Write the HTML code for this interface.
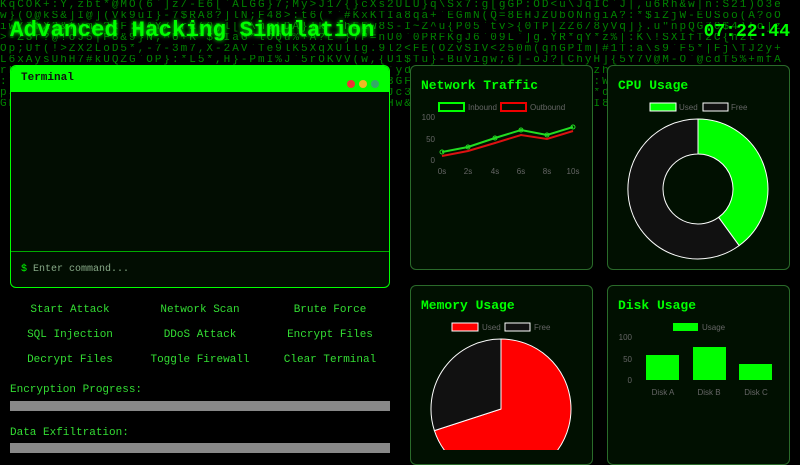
<!DOCTYPE html>
<html><head><meta charset="utf-8"><style>
*{margin:0;padding:0;box-sizing:border-box}
body{width:800px;height:450px;overflow:hidden;background:#000;font-family:"Liberation Mono",monospace;position:relative;color:#0f0}
.mx{position:absolute;left:0;top:0;width:800px;font-size:11px;letter-spacing:2px;color:#0b0;opacity:.7;overflow:hidden}
.mx div{height:11px;line-height:11px;white-space:pre;overflow:hidden}
h1{position:absolute;left:10px;top:17px;font-size:22.5px;font-weight:bold;color:#0f0;text-shadow:0 0 4px #0f0}
.clock{position:absolute;right:10px;top:22px;font-size:18px;font-weight:bold;color:#0f0}
.term{position:absolute;left:10px;top:65px;width:380px;height:223px;background:#020d02;border:1px solid #0f0;border-radius:6px;overflow:hidden}
.th{height:26px;background:#0f0;color:#111;font-size:11px;font-weight:bold;padding:6px 10px}
.dots{position:absolute;right:10px;top:9px}
.dots i{display:inline-block;width:8px;height:8px;border-radius:50%;margin-left:4px}
.inp{position:absolute;left:0;right:0;top:185px;height:38px;border-top:1px solid #0a0;font-size:10px;padding:12px 10px;color:#8a8}
.inp b{color:#0f0;font-weight:normal}
.btn{position:absolute;font-size:11px;color:#3d3;text-align:center;width:130px}
.lbl{position:absolute;left:10px;font-size:11px;color:#3d3}
.bar{position:absolute;left:10px;width:380px;height:10px;background:#888}
.pn{position:absolute;width:183px;background:#011001;border:1px solid #2a6a2a;border-radius:6px}
.pt{position:absolute;left:10px;top:12px;font-size:13px;font-weight:bold;color:#0f0}
</style></head><body>
<div class="mx">
<div>KqCOK+:Y,zbt*@MO(6`]z/-E6[`ALGG}7;My&gt;J1/{}cXs2ULU}q\Sx7:g[gGP:OD&lt;u\JqIC`J|,u6Rh&amp;w|n:S21)O3e</div>
<div>w}(O@kS&amp;]I@](Vk9uI}-7$RA8?]lN;F48&gt;:t6(*`#KxKTIa8qa+`EGmN(Q=8EHJZUbONngiA?:*$iZjW-EUSoo(A?oO</div>
<div>iw/*fX3&amp;fvm&gt;?kF:^^Y/(rR(0jl[f\mq[DA}}k-*hEEw8S-I~Z^u{P05`tv&gt;{0TP[ZZ6/8yVq]}.u"npQG70$4)[o]z</div>
<div>&gt;-Z3r?@!oJ5|F8&amp;9}N;^U+K*$2IaG*lOQu%+A?L*}7P=nU0`0PRFKgJ6`09L`]g.YR*qY*z%|:K\!SXIfT2C{h2t</div>
<div>Op;Uf(!&gt;ZX2LoD5*,-7-3m7,X-2AV`Te9lK5XqXUllg.9l2&lt;FE(OZvSIV&lt;250m(qnGPIm|#1T:a\s9`F5*|Fj\TJ2y+</div>
<div>L6xAysUhH7#kUQZG`OP}:*L5*,H}-PmI%J`5rOKVV(w,{U1$Tu}-BuVigw;6]-oJ?[ChyH]{5Y7V@M-O`@cdT5%+mfA</div>
<div>rkS1xH$3u0mc?Z?!&lt;&lt;z}&amp;tnbZ!zf8hR:`,*VUjMb&lt;pOI9`yd_`]!4n9J?!*:9aBERI,oyzhS8=/&lt;!K}s8AT|626;(/</div>
<div>:\/#h)o~S:!Lu[)&amp;+z\jR(5ZHh;TxC/AQPO@]]=~o*A2q3GFSOR8&amp;2S|.{ZOrDBT+yFzi:W!Y[pE)Kl$6kE`]w5&gt;q</div>
<div>pJ@/ss0Y)Q:~$!!aN=SbXZ&amp;1T.EA+}X:;FnPu*9oQ?L#GJc3yq%TD!eVuO-&lt;I\AFP*i0w*d|c,m+qXQrI;Fr:[wWJx</div>
<div>GE4%2Qv7|@%/&lt;}Tf4;n\t?M2IWsVUR`6&amp;GzSy;1)a-/c=Hw&amp;{h(*fQ2Ts/nBq.p{kZ\e,I8_y?Nx%/AL0K~&lt;[|f&gt;#</div>
</div>
<h1>Advanced Hacking Simulation</h1>
<div class="clock">07:22:44</div>
<div class="term"><div class="th">Terminal</div>
<div class="dots"><i style="background:#e33"></i><i style="background:#eb2"></i><i style="background:#3a6"></i></div>
<div class="inp"><b>$</b> Enter command...</div></div>
<div class="btn" style="left:5px;top:304px">Start Attack</div>
<div class="btn" style="left:135px;top:304px">Network Scan</div>
<div class="btn" style="left:265px;top:304px">Brute Force</div>
<div class="btn" style="left:5px;top:329px">SQL Injection</div>
<div class="btn" style="left:135px;top:329px">DDoS Attack</div>
<div class="btn" style="left:265px;top:329px">Encrypt Files</div>
<div class="btn" style="left:5px;top:354px">Decrypt Files</div>
<div class="btn" style="left:135px;top:354px">Toggle Firewall</div>
<div class="btn" style="left:265px;top:354px">Clear Terminal</div>
<div class="lbl" style="top:384px">Encryption Progress:</div>
<div class="bar" style="top:401px"></div>
<div class="lbl" style="top:427px">Data Exfiltration:</div>
<div class="bar" style="top:443px"></div>

<div class="pn" style="left:410px;top:65px;height:205px"><div class="pt">Network Traffic</div></div>
<div class="pn" style="left:607px;top:65px;height:205px"><div class="pt">CPU Usage</div></div>
<div class="pn" style="left:410px;top:285px;height:180px"><div class="pt">Memory Usage</div></div>
<div class="pn" style="left:607px;top:285px;height:180px"><div class="pt">Disk Usage</div></div>

<svg width="800" height="450" style="position:absolute;left:0;top:0" font-family="Liberation Sans,sans-serif" font-size="8" fill="#666">
<rect x="439" y="103" width="25" height="8" fill="none" stroke="#0f0" stroke-width="2"/><text x="468" y="110">Inbound</text>
<rect x="501" y="103" width="25" height="8" fill="none" stroke="#e00" stroke-width="2"/><text x="530" y="110">Outbound</text>
<text x="435" y="120" text-anchor="end">100</text><text x="435" y="142" text-anchor="end">50</text><text x="435" y="163" text-anchor="end">0</text>
<g text-anchor="middle"><text x="442" y="174">0s</text><text x="468" y="174">2s</text><text x="495" y="174">4s</text><text x="521" y="174">6s</text><text x="547" y="174">8s</text><text x="573" y="174">10s</text></g>
<polyline points="442,152 468,147 495,138 521,130 547,135 573,127" fill="none" stroke="#2d2" stroke-width="2"/>
<polyline points="442,156 468,151 495,143 521,135 547,139 573,131" fill="none" stroke="#d11" stroke-width="2"/>
<g fill="none" stroke="#2d2"><circle cx="442" cy="152" r="2"/><circle cx="468" cy="147" r="2"/><circle cx="495" cy="138" r="2"/><circle cx="521" cy="130" r="2"/><circle cx="547" cy="135" r="2"/><circle cx="573" cy="127" r="2"/></g>
<rect x="650" y="103" width="26" height="8" fill="#0f0" stroke="#fff"/><text x="679" y="110">Used</text>
<rect x="703" y="103" width="25" height="8" fill="#111" stroke="#fff"/><text x="731" y="110">Free</text>
<path d="M698 119 A70 70 0 0 1 739.1 245.6 L718.6 217.3 A35 35 0 0 0 698 154 Z" fill="#0f0" stroke="#fff"/>
<path d="M739.1 245.6 A70 70 0 1 1 698 119 L698 154 A35 35 0 1 0 718.6 217.3 Z" fill="#111" stroke="#fff"/>
<rect x="452" y="323" width="26" height="8" fill="#f00" stroke="#fff"/><text x="482" y="330">Used</text>
<rect x="505" y="323" width="25" height="8" fill="#111" stroke="#fff"/><text x="534" y="330">Free</text>
<path d="M501 339 A70 70 0 1 1 434.4 430.6 L501 409 Z" fill="#f00" stroke="#fff"/>
<path d="M434.4 430.6 A70 70 0 0 1 501 339 L501 409 Z" fill="#111" stroke="#fff"/>
<rect x="673" y="323" width="25" height="8" fill="#0f0"/><text x="702" y="330">Usage</text>
<text x="632" y="340" text-anchor="end">100</text><text x="632" y="362" text-anchor="end">50</text><text x="632" y="383" text-anchor="end">0</text>
<rect x="646" y="355" width="33" height="25" fill="#0f0"/><rect x="693" y="347" width="33" height="33" fill="#0f0"/><rect x="739" y="364" width="33" height="16" fill="#0f0"/>
<g text-anchor="middle"><text x="663" y="395">Disk A</text><text x="709" y="395">Disk B</text><text x="756" y="395">Disk C</text></g>
</svg>
</body></html>
